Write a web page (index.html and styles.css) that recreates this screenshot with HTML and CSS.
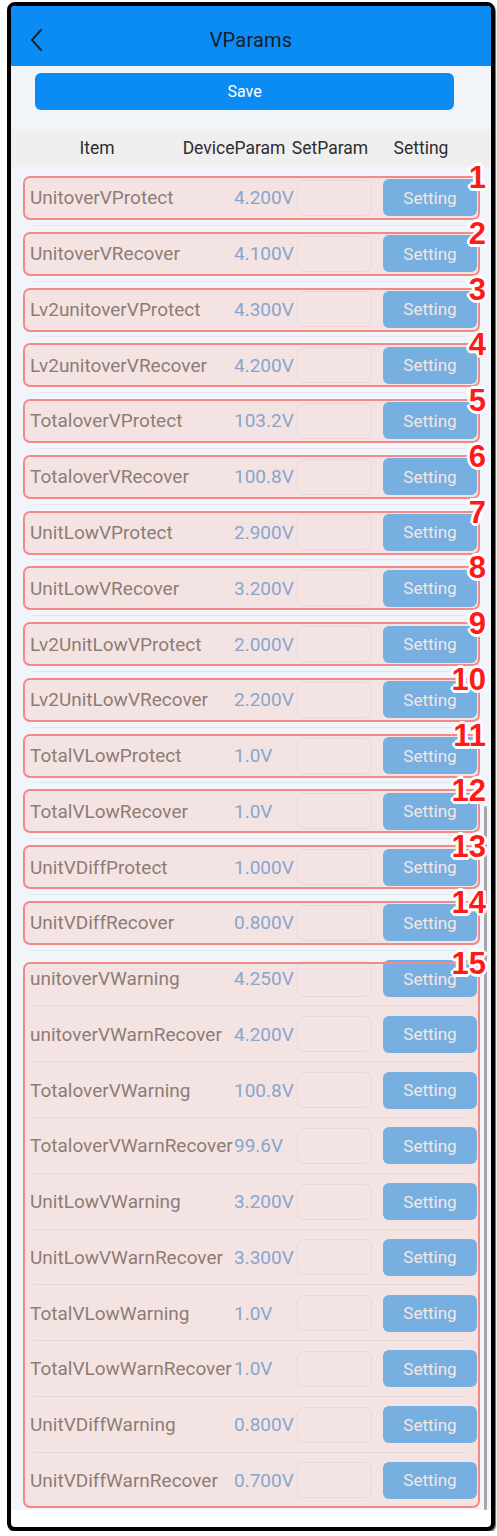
FILE: index.html
```html
<!DOCTYPE html>
<html>
<head>
<meta charset="utf-8">
<link rel="stylesheet" href="styles.css">
</head>
<body>
<div class="frame">
  <div class="topbar">
    <svg class="back" width="20" height="24" viewBox="0 0 20 24"><path d="M11 2 L2 12 L11 22" fill="none" stroke="#1c2430" stroke-width="2" stroke-linecap="round" stroke-linejoin="round"/></svg>
    <div class="title">VParams</div>
  </div>
  <div class="content">
    <div class="save">Save</div>
    <div class="thead">
      <div class="th c1">Item</div>
      <div class="th c2">DeviceParam</div>
      <div class="th c3">SetParam</div>
      <div class="th c4">Setting</div>
    </div>
    <div class="list">
      <div class="row"><span class="lbl">UnitoverVProtect</span><span class="val">4.200V</span><span class="inp"></span><span class="btn">Setting</span><div class="mark"><span class="num">1</span></div></div>
      <div class="row"><span class="lbl">UnitoverVRecover</span><span class="val">4.100V</span><span class="inp"></span><span class="btn">Setting</span><div class="mark"><span class="num">2</span></div></div>
      <div class="row"><span class="lbl">Lv2unitoverVProtect</span><span class="val">4.300V</span><span class="inp"></span><span class="btn">Setting</span><div class="mark"><span class="num">3</span></div></div>
      <div class="row"><span class="lbl">Lv2unitoverVRecover</span><span class="val">4.200V</span><span class="inp"></span><span class="btn">Setting</span><div class="mark"><span class="num">4</span></div></div>
      <div class="row"><span class="lbl">TotaloverVProtect</span><span class="val">103.2V</span><span class="inp"></span><span class="btn">Setting</span><div class="mark"><span class="num">5</span></div></div>
      <div class="row"><span class="lbl">TotaloverVRecover</span><span class="val">100.8V</span><span class="inp"></span><span class="btn">Setting</span><div class="mark"><span class="num">6</span></div></div>
      <div class="row"><span class="lbl">UnitLowVProtect</span><span class="val">2.900V</span><span class="inp"></span><span class="btn">Setting</span><div class="mark"><span class="num">7</span></div></div>
      <div class="row"><span class="lbl">UnitLowVRecover</span><span class="val">3.200V</span><span class="inp"></span><span class="btn">Setting</span><div class="mark"><span class="num">8</span></div></div>
      <div class="row"><span class="lbl">Lv2UnitLowVProtect</span><span class="val">2.000V</span><span class="inp"></span><span class="btn">Setting</span><div class="mark"><span class="num">9</span></div></div>
      <div class="row"><span class="lbl">Lv2UnitLowVRecover</span><span class="val">2.200V</span><span class="inp"></span><span class="btn">Setting</span><div class="mark"><span class="num">10</span></div></div>
      <div class="row"><span class="lbl">TotalVLowProtect</span><span class="val">1.0V</span><span class="inp"></span><span class="btn">Setting</span><div class="mark"><span class="num">11</span></div></div>
      <div class="row"><span class="lbl">TotalVLowRecover</span><span class="val">1.0V</span><span class="inp"></span><span class="btn">Setting</span><div class="mark"><span class="num">12</span></div></div>
      <div class="row"><span class="lbl">UnitVDiffProtect</span><span class="val">1.000V</span><span class="inp"></span><span class="btn">Setting</span><div class="mark"><span class="num">13</span></div></div>
      <div class="row"><span class="lbl">UnitVDiffRecover</span><span class="val">0.800V</span><span class="inp"></span><span class="btn">Setting</span><div class="mark"><span class="num">14</span></div></div>
      <div class="row"><span class="lbl">unitoverVWarning</span><span class="val">4.250V</span><span class="inp"></span><span class="btn">Setting</span><div class="mark group"><span class="num">15</span></div></div>
      <div class="row"><span class="lbl">unitoverVWarnRecover</span><span class="val">4.200V</span><span class="inp"></span><span class="btn">Setting</span></div>
      <div class="row"><span class="lbl">TotaloverVWarning</span><span class="val">100.8V</span><span class="inp"></span><span class="btn">Setting</span></div>
      <div class="row"><span class="lbl">TotaloverVWarnRecover</span><span class="val">99.6V</span><span class="inp"></span><span class="btn">Setting</span></div>
      <div class="row"><span class="lbl">UnitLowVWarning</span><span class="val">3.200V</span><span class="inp"></span><span class="btn">Setting</span></div>
      <div class="row"><span class="lbl">UnitLowVWarnRecover</span><span class="val">3.300V</span><span class="inp"></span><span class="btn">Setting</span></div>
      <div class="row"><span class="lbl">TotalVLowWarning</span><span class="val">1.0V</span><span class="inp"></span><span class="btn">Setting</span></div>
      <div class="row"><span class="lbl">TotalVLowWarnRecover</span><span class="val">1.0V</span><span class="inp"></span><span class="btn">Setting</span></div>
      <div class="row"><span class="lbl">UnitVDiffWarning</span><span class="val">0.800V</span><span class="inp"></span><span class="btn">Setting</span></div>
      <div class="row last"><span class="lbl">UnitVDiffWarnRecover</span><span class="val">0.700V</span><span class="inp"></span><span class="btn">Setting</span></div>
    </div>
    <div class="scrollbar"></div>
  </div>
</div>
</body>
</html>
```

FILE: styles.css
```css
html, body {
  margin: 0;
  padding: 0;
  background: #ffffff;
}
body {
  font-family: Roboto, "Noto Sans", "Liberation Sans", sans-serif;
}
.frame {
  margin: 2px 0 0 7px;
  width: 480px;
  height: 1521px;
  border: 4px solid #000;
  border-radius: 8px;
  background: #ffffff;
  overflow: hidden;
  box-shadow: 1px 2px 1px rgba(0,0,0,0.6);
}
.topbar {
  height: 60px;
  box-sizing: border-box;
  padding-top: 8px;
  background: #0b8cf4;
  position: relative;
  display: flex;
  align-items: center;
  justify-content: center;
}
.back {
  position: absolute;
  left: 19px;
  top: 22px;
}
.title {
  font-size: 20px;
  color: #16202c;
  letter-spacing: 0.2px;
}
.content {
  position: relative;
  background: #f1f4f9;
  height: 1444px;
  display: flex;
  flex-direction: column;
}
.save {
  margin: 7px 0 0 24px;
  width: 419px;
  height: 37px;
  border-radius: 6px;
  background: #0b8cf4;
  color: #fff;
  font-size: 16px;
  display: flex;
  align-items: center;
  justify-content: center;
}
.thead {
  margin-top: 19px;
  height: 38px;
  background: #efefef;
  display: flex;
  align-items: center;
  font-size: 17.5px;
  color: #2e2e2e;
}
.th {
  display: flex;
  justify-content: center;
  white-space: nowrap;
}
.c1 { width: 172px; }
.c2 { width: 102px; }
.c3 { width: 90px; }
.c4 { width: 92px; }
.list {
  margin-top: 3px;
  display: flex;
  flex-direction: column;
}
.row {
  position: relative;
  height: 55.78px;
  display: flex;
  align-items: center;
  padding-left: 19px;
  font-size: 19px;
  white-space: nowrap;
}
.row::after {
  content: "";
  position: absolute;
  left: 22px;
  width: 432px;
  bottom: 0;
  height: 1px;
  background: #e2e5ea;
}
.row.last::after {
  display: none;
}
.lbl {
  width: 204px;
  flex: none;
  color: #7a7676;
}
.val {
  width: 63px;
  flex: none;
  color: #72a8df;
}
.inp {
  width: 75px;
  height: 36px;
  flex: none;
  box-sizing: border-box;
  border: 1px solid #e3e5ea;
  border-radius: 7px;
}
.btn {
  margin-left: 11px;
  width: 94px;
  height: 37px;
  flex: none;
  border-radius: 6px;
  background: #5cb4f6;
  color: #f4f7fb;
  font-size: 17px;
  display: flex;
  align-items: center;
  justify-content: center;
}
.mark {
  position: absolute;
  z-index: 2;
  left: 12px;
  top: 6px;
  width: 457px;
  height: 44px;
  box-sizing: border-box;
  border: 2px solid #f38a88;
  border-radius: 7px;
  background: rgba(255, 150, 110, 0.16);
}
.mark.group {
  top: 11px;
  height: 546px;
}
.num {
  position: absolute;
  right: -8px;
  top: -16px;
  font-family: "Liberation Sans", Arial, sans-serif;
  font-weight: bold;
  font-size: 31px;
  line-height: 1;
  color: #ff1a1a;
  text-shadow:
    2px 0 0 #fff, -2px 0 0 #fff, 0 2px 0 #fff, 0 -2px 0 #fff,
    1.5px 1.5px 0 #fff, -1.5px 1.5px 0 #fff, 1.5px -1.5px 0 #fff, -1.5px -1.5px 0 #fff,
    3px 0 0 #fff, -3px 0 0 #fff, 0 3px 0 #fff, 0 -3px 0 #fff;
}
.scrollbar {
  position: absolute;
  right: 4px;
  top: 740px;
  width: 3px;
  height: 704px;
  background: #a6a6a6;
  border-radius: 2px;
}
```
